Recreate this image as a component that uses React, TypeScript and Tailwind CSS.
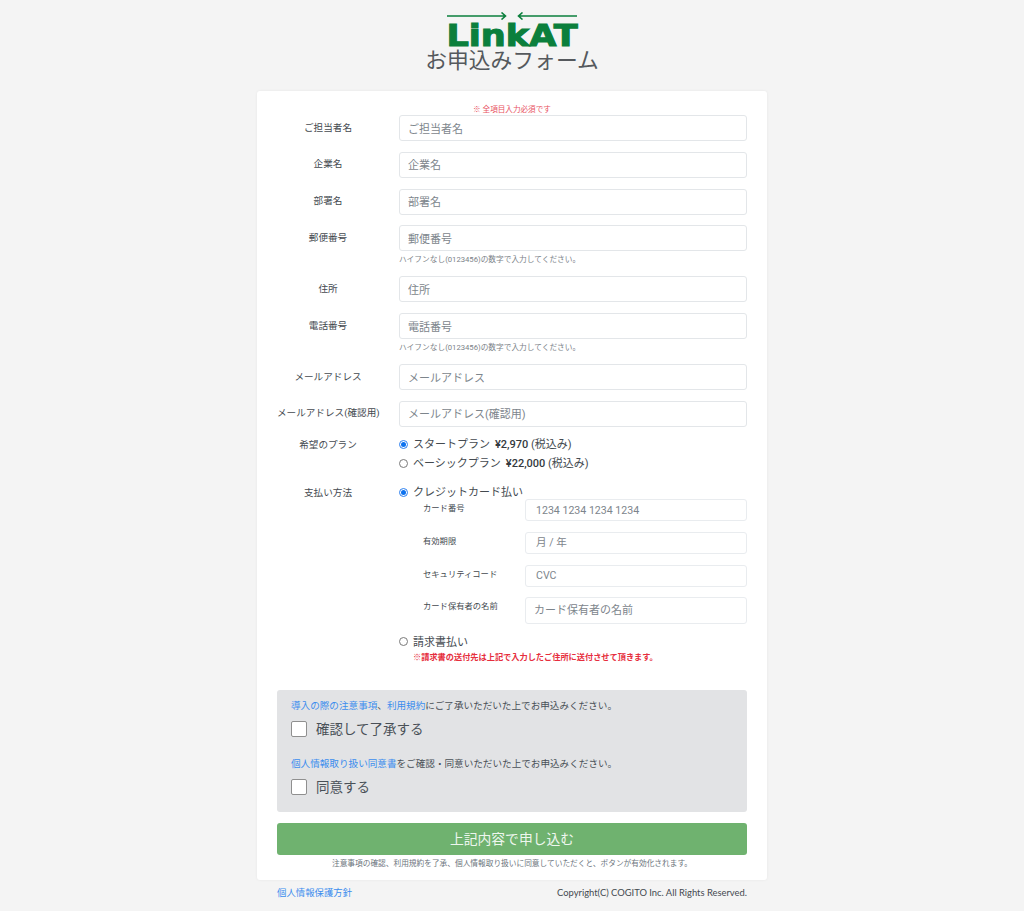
const fontStack = "font-['Roboto','Noto_Sans_CJK_JP',sans-serif]";

type FieldRowProps = {
  label: string;
  hint?: string;
};

function TextField({ placeholder }: { placeholder: string }) {
  return (
    <input
      type="text"
      placeholder={placeholder}
      className="block h-[26px] w-full rounded-[3px] border border-[#e3e6e9] bg-white px-2 pt-[2px] text-[11px] text-[#495057] outline-none placeholder:text-[#7d858c]"
    />
  );
}

function FieldRow({ label, hint }: FieldRowProps) {
  return (
    <div className="mb-[10.75px] flex">
      <label className="w-[102px] shrink-0 pt-[4.5px] text-center text-[9.6px] leading-[16px] whitespace-nowrap text-[#444a50]">
        {label}
      </label>
      <div className="ml-5 flex-1">
        <TextField placeholder={label} />
        {hint && (
          <p className="mt-[3px] mb-[-0.75px] text-[7.7px] leading-[12px] text-[#7b8288]">
            {hint}
          </p>
        )}
      </div>
    </div>
  );
}

function Radio({ checked }: { checked?: boolean }) {
  return checked ? (
    <span className="flex h-[9px] w-[9px] shrink-0 items-center justify-center rounded-full border border-[#2b7ff0] bg-white">
      <span className="h-[5px] w-[5px] rounded-full bg-[#0d72ef]" />
    </span>
  ) : (
    <span className="h-[9px] w-[9px] shrink-0 rounded-full border border-[#7a7a7a] bg-white" />
  );
}

function PlanOption({
  name,
  price,
  checked,
}: {
  name: string;
  price: string;
  checked?: boolean;
}) {
  return (
    <div className="flex h-[19px] items-center gap-[5px] text-[11px] text-[#444a50]">
      <Radio checked={checked} />
      <span className="pt-[2px]">
        {name}
        <span className="ml-[5px] font-medium text-[#343a40]">{price}</span>{" "}
        <span>(税込み)</span>
      </span>
    </div>
  );
}

function CardField({
  label,
  placeholder,
  tall,
}: {
  label: string;
  placeholder: string;
  tall?: boolean;
}) {
  return (
    <div className="flex">
      <span className="w-[102px] shrink-0 pt-[3px] text-[8.3px] leading-[12px] text-[#444a50]">
        {label}
      </span>
      <input
        type="text"
        placeholder={placeholder}
        className={
          tall
            ? "h-[27px] min-w-0 flex-1 rounded-[3px] border border-[#e9ecef] bg-white px-[8px] text-[11px] outline-none placeholder:text-[#7d858c]"
            : "h-[22px] min-w-0 flex-1 rounded-[3px] border border-[#e9ecef] bg-white px-[10px] text-[10.6px] outline-none placeholder:text-[#7d858c]"
        }
      />
    </div>
  );
}

function Consent({
  children,
  label,
}: {
  children: React.ReactNode;
  label: string;
}) {
  return (
    <div>
      <p className="mb-[-1px] pt-px text-[9.6px] leading-[16px] text-[#495057]">
        {children}
      </p>
      <div className="mt-[6px] flex items-center gap-[9px]">
        <span className="h-[16px] w-[16px] rounded-[2px] border border-[#8f8f8f] bg-white" />
        <span className="text-[13.5px] leading-[20px] text-[#495057]">
          {label}
        </span>
      </div>
    </div>
  );
}

function Logo() {
  return (
    <div className="flex w-[130px] flex-col items-center">
      <svg width="130" height="8" viewBox="0 0 130 8" className="block">
        <path
          d="M0 4H58M54.5 .5L58.5 4L54.5 7.5M130 4H72M75.5 .5L71.5 4L75.5 7.5"
          fill="none"
          stroke="#0b7f3c"
          strokeWidth="1.6"
        />
      </svg>
      <span className="mt-[3px] scale-x-[1.17] font-['DejaVu_Sans',sans-serif] text-[30px] leading-[25px] font-bold text-[#0b7f3c] [-webkit-text-stroke:1.1px_#0b7f3c]">
        LinkAT
      </span>
    </div>
  );
}

export default function App() {
  return (
    <div className={`min-h-[911px] bg-[#f4f4f4] ${fontStack}`}>
      <div className="mx-auto w-[510px]">
        <header className="flex h-[91px] flex-col items-center pt-[12px]">
          <Logo />
          <h1 className="mt-0 text-[21.8px] leading-[26px] font-normal text-[#55595d]">
            お申込みフォーム
          </h1>
        </header>

        <main className="rounded-[3px] bg-white px-5 pt-[11px] pb-[9px] shadow-[0_0_3px_rgba(0,0,0,0.06)]">
          <p className="mt-px mb-[-1px] text-center text-[7.6px] leading-[13px] text-[#e8525f]">
            ※ 全項目入力必須です
          </p>

          <FieldRow label="ご担当者名" />
          <FieldRow label="企業名" />
          <FieldRow label="部署名" />
          <FieldRow
            label="郵便番号"
            hint="ハイフンなし(0123456)の数字で入力してください。"
          />
          <FieldRow label="住所" />
          <FieldRow
            label="電話番号"
            hint="ハイフンなし(0123456)の数字で入力してください。"
          />
          <FieldRow label="メールアドレス" />
          <FieldRow label="メールアドレス(確認用)" />

          <div className="mt-[-3px] flex">
            <span className="w-[102px] shrink-0 pt-[2px] text-center text-[9.6px] leading-[16px] text-[#444a50]">
              希望のプラン
            </span>
            <div className="ml-5">
              <PlanOption name="スタートプラン" price="¥2,970" checked />
              <PlanOption name="ベーシックプラン" price="¥22,000" />
            </div>
          </div>

          <div className="mt-[10px] flex">
            <span className="w-[102px] shrink-0 pt-[2px] text-center text-[9.6px] leading-[16px] text-[#444a50]">
              支払い方法
            </span>
            <div className="ml-5 flex-1">
              <div className="flex h-[19px] items-center gap-[5px] text-[11px] text-[#444a50]">
                <Radio checked />
                <span className="pt-[3px]">クレジットカード払い</span>
              </div>
              <div className="mt-[-2.5px] ml-[24px] flex flex-col gap-[10.75px]">
                <CardField label="カード番号" placeholder="1234 1234 1234 1234" />
                <CardField label="有効期限" placeholder="月 / 年" />
                <CardField label="セキュリティコード" placeholder="CVC" />
                <CardField
                  label="カード保有者の名前"
                  placeholder="カード保有者の名前"
                  tall
                />
              </div>
              <div className="mt-[8px] flex h-[19px] items-center gap-[5px] text-[11px] text-[#444a50]">
                <Radio />
                <span className="pt-[2px]">請求書払い</span>
              </div>
              <p className="mt-[-1px] ml-[14px] text-[8.2px] leading-[14px] font-bold text-[#e62e3d]">
                ※請求書の送付先は上記で入力したご住所に送付させて頂きます。
              </p>
            </div>
          </div>

          <section className="mt-[26px] flex flex-col gap-[16px] rounded-[3px] bg-[#e2e3e5] px-[14px] pt-[7px] pb-[15px]">
            <Consent label="確認して了承する">
              <a className="text-[#3b8dee]">導入の際の注意事項</a>、
              <a className="text-[#3b8dee]">利用規約</a>
              にご了承いただいた上でお申込みください。
            </Consent>
            <Consent label="同意する">
              <a className="text-[#3b8dee]">個人情報取り扱い同意書</a>
              をご確認・同意いただいた上でお申込みください。
            </Consent>
          </section>

          <button
            type="button"
            className="mt-[11px] h-[32px] w-full rounded-[3px] bg-[#6fb26f] text-[13.8px] text-[#eef6ee]"
          >
            上記内容で申し込む
          </button>
          <p className="mt-[2px] text-center text-[7.7px] leading-[14px] text-[#6c757d]">
            注意事項の確認、利用規約を了承、個人情報取り扱いに同意していただくと、ボタンが有効化されます。
          </p>
        </main>

        <footer className="flex justify-between px-5 pt-[5px] text-[9.4px] leading-[16px]">
          <a className="text-[#3b8dee]">個人情報保護方針</a>
          <span className="font-['Lato',sans-serif] text-[9.4px] text-[#444a50]">
            Copyright(C) COGITO Inc. All Rights Reserved.
          </span>
        </footer>
      </div>
    </div>
  );
}
